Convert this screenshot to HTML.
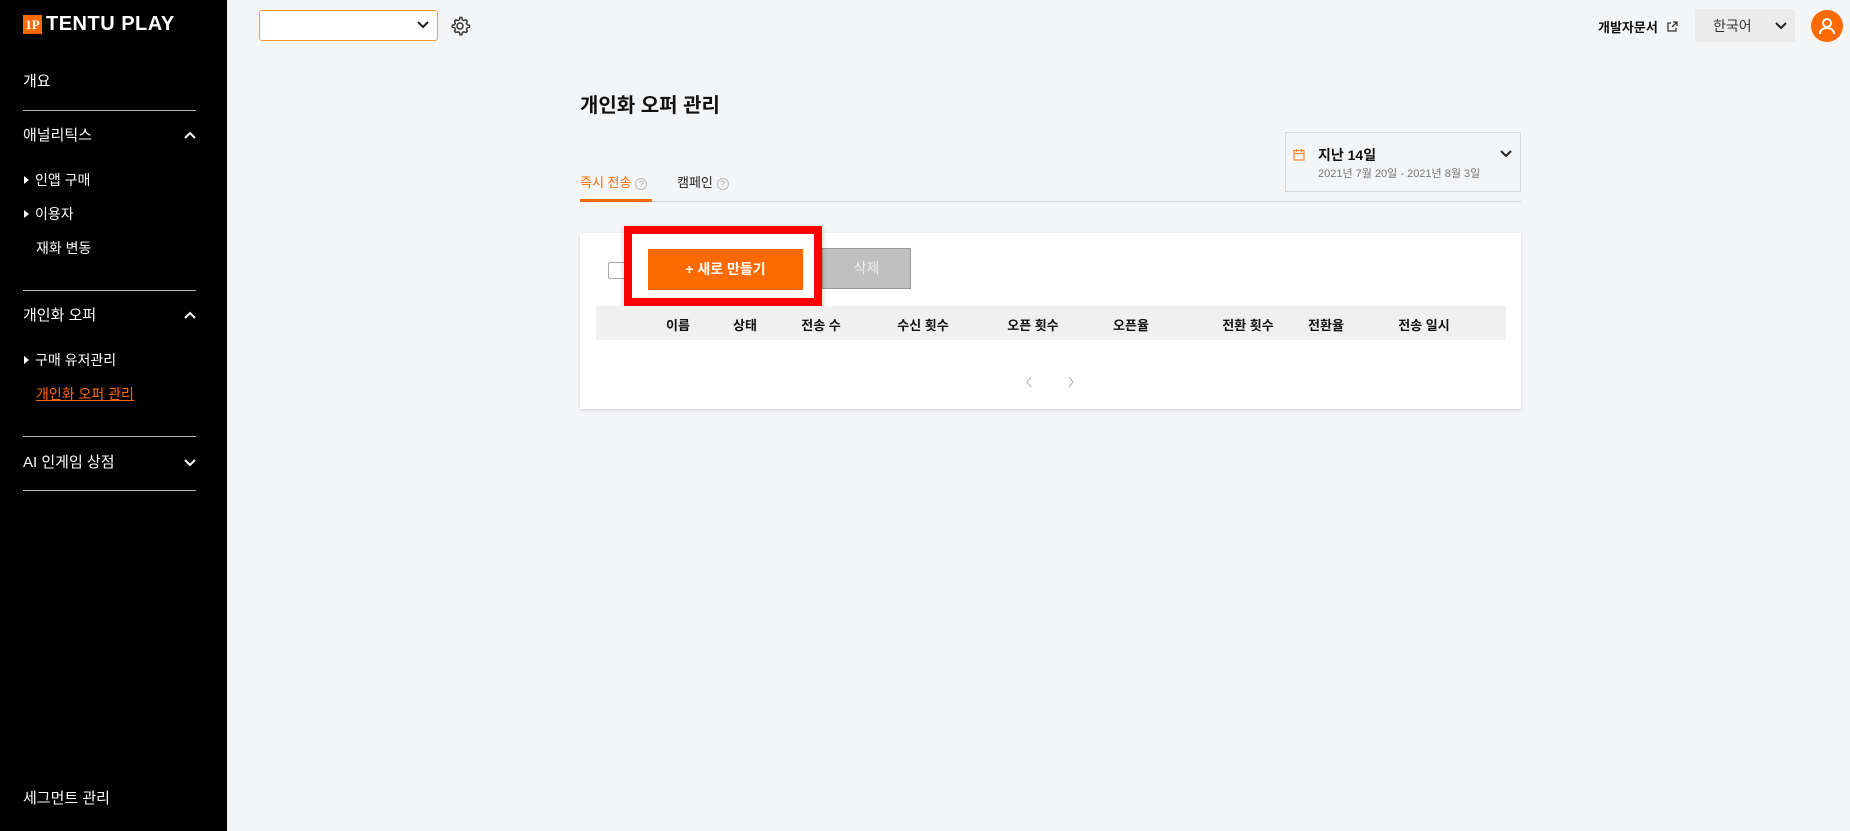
<!DOCTYPE html>
<html><head><meta charset="utf-8"><style>
*{box-sizing:border-box;margin:0;padding:0}
body{width:1850px;height:831px;background:#f4f5f7;font-family:"Liberation Sans","Noto Sans CJK KR",sans-serif;position:relative;overflow:hidden;color:#111}
.abs{position:absolute}
#side{left:0;top:0;width:227px;height:831px;background:#000;color:#fff}
.si{position:absolute;font-size:15px;line-height:20px;white-space:nowrap}
.hr{position:absolute;left:23px;width:173px;height:1px;background:#bbb}
.tri{display:inline-block;width:0;height:0;border-left:5px solid #fff;border-top:4px solid transparent;border-bottom:4px solid transparent;margin-right:6px;vertical-align:1px}
.chev{position:absolute;left:184px}
.th{position:absolute;top:315px;font-size:13px;font-weight:bold;transform:translateX(-50%);white-space:nowrap}
</style></head><body>
<div id="side" class="abs">
  <div class="abs" style="left:23px;top:15px;width:19px;height:19px;background:#ff6a00;color:#fff;font-weight:bold;font-size:13px;line-height:19px;text-align:center;font-family:'Liberation Serif',serif">1P</div>
  <div class="abs" style="left:46px;top:13px;font-size:20px;font-weight:900;letter-spacing:0.5px;font-family:'Liberation Sans',sans-serif">TENTU PL<span style="color:#fff">A</span>Y</div>
  <div class="si" style="left:23px;top:72px">개요</div>
  <div class="hr" style="top:110px"></div>
  <div class="si" style="left:23px;top:126px">애널리틱스</div>
  <svg class="chev" style="top:131px" width="12" height="8"><path d="M1 7L6 2L11 7" stroke="#fff" stroke-width="2" fill="none"/></svg>
  <div class="si" style="left:24px;top:170px;font-size:14px"><span class="tri"></span>인앱 구매</div>
  <div class="si" style="left:24px;top:204px;font-size:14px"><span class="tri"></span>이용자</div>
  <div class="si" style="left:36px;top:238px;font-size:14px">재화 변동</div>
  <div class="hr" style="top:290px"></div>
  <div class="si" style="left:23px;top:306px">개인화 오퍼</div>
  <svg class="chev" style="top:311px" width="12" height="8"><path d="M1 7L6 2L11 7" stroke="#fff" stroke-width="2" fill="none"/></svg>
  <div class="si" style="left:24px;top:350px;font-size:14px"><span class="tri"></span>구매 유저관리</div>
  <div class="si" style="left:36px;top:384px;font-size:14px;color:#ff6a00;text-decoration:underline">개인화 오퍼 관리</div>
  <div class="hr" style="top:436px"></div>
  <div class="si" style="left:23px;top:453px">AI 인게임 상점</div>
  <svg class="chev" style="top:459px" width="12" height="8"><path d="M1 1L6 6L11 1" stroke="#fff" stroke-width="2" fill="none"/></svg>
  <div class="hr" style="top:490px"></div>
  <div class="si" style="left:23px;top:789px">세그먼트 관리</div>
</div>

<div class="abs" style="left:259px;top:10px;width:179px;height:31px;background:#fff;border:1px solid #ff9a30;border-radius:3px"></div>
<svg class="abs" style="left:417px;top:21px" width="12" height="8"><path d="M1 1L6 6L11 1" stroke="#222" stroke-width="2" fill="none"/></svg>
<svg class="abs" style="left:449px;top:15px" width="22" height="22" viewBox="0 0 24 24"><path d="M12 2.5l2 .3.6 2.4 1.6.9 2.3-.8 1.4 1.4-.8 2.3.9 1.6 2.4.6v2l-2.4.6-.9 1.6.8 2.3-1.4 1.4-2.3-.8-1.6.9-.6 2.4h-2l-.6-2.4-1.6-.9-2.3.8-1.4-1.4.8-2.3-.9-1.6-2.4-.6v-2l2.4-.6.9-1.6-.8-2.3 1.4-1.4 2.3.8 1.6-.9.6-2.4z" fill="none" stroke="#333" stroke-width="1.6"/><circle cx="12" cy="12" r="3.3" fill="none" stroke="#333" stroke-width="1.6"/></svg>

<div class="abs" style="left:1598px;top:17px;font-size:13px;font-weight:bold">개발자문서</div>
<svg class="abs" style="left:1667px;top:21px" width="11" height="11"><path d="M4 2H1v8h8V7M6 1h4v4M10 1L5 6" stroke="#333" stroke-width="1.3" fill="none"/></svg>
<div class="abs" style="left:1695px;top:9px;width:100px;height:33px;background:#ebebeb;border-radius:2px"></div>
<div class="abs" style="left:1713px;top:16px;font-size:14px;color:#333">한국어</div>
<svg class="abs" style="left:1775px;top:22px" width="12" height="8"><path d="M1 1L6 6L11 1" stroke="#222" stroke-width="2" fill="none"/></svg>
<div class="abs" style="left:1811px;top:10px;width:32px;height:32px;border-radius:50%;background:#ff6a00"></div>
<svg class="abs" style="left:1817px;top:16px" width="20" height="20"><circle cx="10" cy="7" r="4" stroke="#fff" stroke-width="2" fill="none"/><path d="M3 18c0-4 3-6 7-6s7 2 7 6" stroke="#fff" stroke-width="2" fill="none"/></svg>

<div class="abs" style="left:580px;top:89px;font-size:20px;font-weight:bold">개인화 오퍼 관리</div>

<div class="abs" style="left:580px;top:172px;font-size:13px;color:#ff6a00">즉시 전송 <span style="display:inline-block;width:12px;height:12px;border:1px solid #bbb;border-radius:50%;font-size:9px;line-height:10px;text-align:center;color:#aaa">?</span></div>
<div class="abs" style="left:677px;top:172px;font-size:13px;color:#222">캠페인 <span style="display:inline-block;width:12px;height:12px;border:1px solid #bbb;border-radius:50%;font-size:9px;line-height:10px;text-align:center;color:#aaa">?</span></div>
<div class="abs" style="left:580px;top:201px;width:941px;height:1px;background:#d5d5d5"></div>
<div class="abs" style="left:580px;top:199px;width:72px;height:3px;background:#ff6a00"></div>

<div class="abs" style="left:1285px;top:132px;width:236px;height:60px;border:1px solid #d8d8d8;background:#f4f5f7"></div>
<svg class="abs" style="left:1293px;top:148px" width="12" height="13"><rect x="1" y="2.5" width="10" height="9.5" stroke="#ff8a30" fill="none" stroke-width="1.2"/><path d="M1 5.5h10M3.5 1v3M8.5 1v3" stroke="#ff8a30" stroke-width="1.2"/></svg>
<div class="abs" style="left:1318px;top:145px;font-size:14px;font-weight:bold">지난 14일</div>
<div class="abs" style="left:1318px;top:165px;font-size:11px;color:#777">2021년 7월 20일 - 2021년 8월 3일</div>
<svg class="abs" style="left:1500px;top:150px" width="12" height="8"><path d="M1 1L6 6L11 1" stroke="#222" stroke-width="2" fill="none"/></svg>

<div class="abs" style="left:580px;top:233px;width:941px;height:176px;background:#fff;box-shadow:0 1px 3px rgba(0,0,0,.15)"></div>
<div class="abs" style="left:608px;top:262px;width:17px;height:17px;border:1px solid #aaa;border-radius:2px;background:#fff"></div>
<div class="abs" style="left:822px;top:248px;width:89px;height:41px;background:#c0c0c0;border:1px solid #999;color:#eee;font-size:14px;text-align:center;line-height:39px">삭제</div>
<div class="abs" style="left:624px;top:226px;width:198px;height:80px;border:8px solid #ff0000;box-shadow:0 2px 6px rgba(0,0,0,.2)"></div>
<div class="abs" style="left:648px;top:249px;width:155px;height:41px;background:#ff6a00;color:#fff;font-size:14px;text-align:center;line-height:41px;font-weight:bold">+ 새로 만들기</div>

<div class="abs" style="left:596px;top:306px;width:910px;height:34px;background:#f0f0f0"></div>
<div class="th" style="left:678px">이름</div>
<div class="th" style="left:745px">상태</div>
<div class="th" style="left:821px">전송 수</div>
<div class="th" style="left:923px">수신 횟수</div>
<div class="th" style="left:1033px">오픈 횟수</div>
<div class="th" style="left:1131px">오픈율</div>
<div class="th" style="left:1248px">전환 횟수</div>
<div class="th" style="left:1326px">전환율</div>
<div class="th" style="left:1424px">전송 일시</div>
<svg class="abs" style="left:1025px;top:376px" width="8" height="12"><path d="M6 1L2 6L6 11" stroke="#bbb" stroke-width="1.3" fill="none"/></svg>
<svg class="abs" style="left:1067px;top:376px" width="8" height="12"><path d="M2 1L6 6L2 11" stroke="#bbb" stroke-width="1.3" fill="none"/></svg>
</body></html>
